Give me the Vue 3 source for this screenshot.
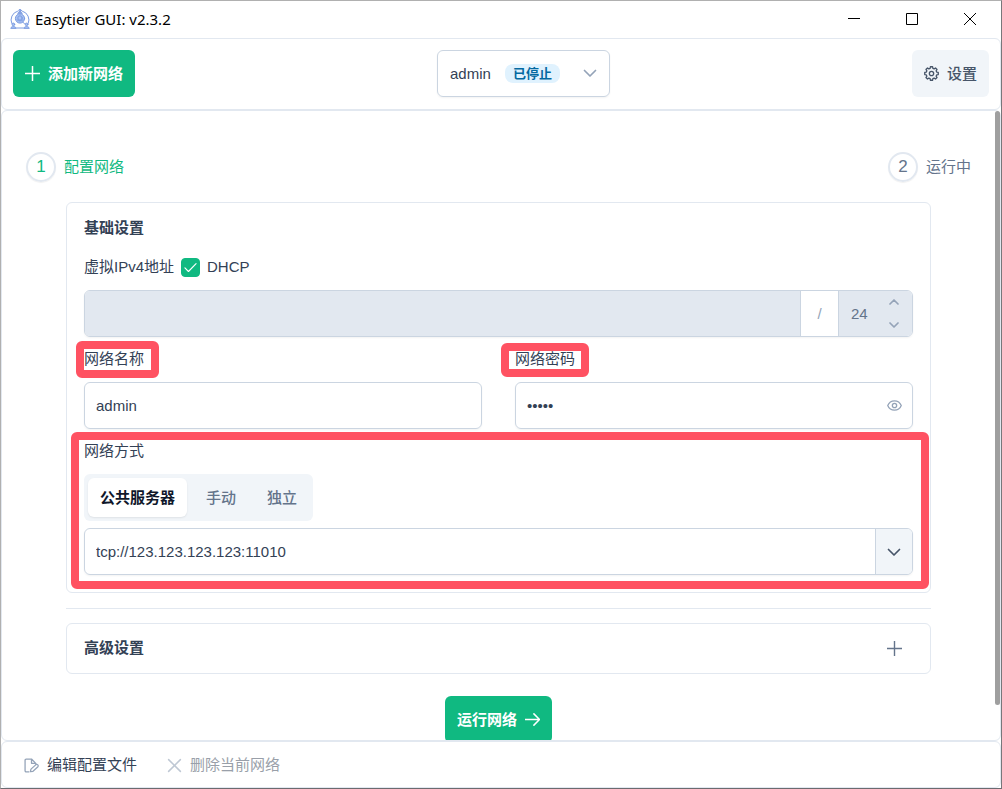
<script setup>
import { ref } from 'vue'

const dhcp = ref(true)
const address = ref('')
const prefix = ref('24')
const networkName = ref('admin')
const networkSecret = ref('admin')
const server = ref('tcp://123.123.123.123:11010')
const instance = ref('admin')
const method = ref(0)
const methods = ['公共服务器', '手动', '独立']

// Outline of the settings gear: eight teeth on a 16 unit grid.
const gear = (() => {
  const pts = []
  for (let i = 0; i < 8; i++) {
    for (const [da, r] of [[-15, 5.7], [-9, 7.3], [9, 7.3], [15, 5.7]]) {
      const a = ((i * 45 + da) * Math.PI) / 180
      pts.push(`${(8 + r * Math.sin(a)).toFixed(2)} ${(8 - r * Math.cos(a)).toFixed(2)}`)
    }
  }
  return `M${pts.join('L')}Z`
})()
</script>

<template>
  <div class="window">
    <header class="titlebar">
      <svg class="logo" viewBox="0 0 20 20" aria-hidden="true">
        <path d="M1.800 14.500A8.800 8.800 0 0 1 7.500 2.200M12.500 2.200a8.800 8.800 0 0 1 5.700 12.300M6.500 19h7" />
        <circle cx="10" cy="9.500" r="4.600" class="logo-fill" />
        <circle cx="10" cy="9" r="2.200" />
        <path d="M7 10.800c2 1.600 4 1.600 6 0M12.700 13l2.300 2.300" />
        <circle cx="10" cy="1.600" r="1.200" class="logo-fill" />
        <circle cx="3.400" cy="15.400" r="1.300" class="logo-fill" />
        <circle cx="16.600" cy="15.400" r="1.300" class="logo-fill" />
        <path d="M.8 19c.3-2 4.900-2 5.200 0zM14 19c.3-2 4.900-2 5.200 0zM7.800 4c.5-1.300 3.900-1.300 4.400 0z" class="logo-fill" />
      </svg>
      <h1>Easytier GUI: v2.3.2</h1>
      <div class="controls">
        <button aria-label="最小化"><svg viewBox="0 0 12 12"><path d="M0 5.500h12" /></svg></button>
        <button aria-label="最大化"><svg viewBox="0 0 12 12"><path d="M.5.5h11v11H.5z" /></svg></button>
        <button aria-label="关闭"><svg viewBox="0 0 12 12"><path d="M0 0l12 12M12 0L0 12" /></svg></button>
      </div>
    </header>

    <nav class="toolbar">
      <button class="btn primary">
        <svg class="icon" viewBox="0 0 16 16"><path d="M8 .5v15M.5 8h15" /></svg>添加新网络
      </button>
      <div class="picker">
        <select v-model="instance" aria-label="网络"><option>admin</option></select>
        <span class="tag">已停止</span>
        <svg class="picker-arrow" viewBox="0 0 14 14"><path d="M1.500 4.500l5.500 5.500 5.500-5.500" /></svg>
      </div>
      <button class="btn secondary">
        <svg class="icon gear" viewBox="0 0 16 16"><path :d="gear" /><circle cx="8" cy="8" r="2.300" /></svg>设置
      </button>
    </nav>

    <main class="body">
      <div class="scroller">
        <ol class="steps">
          <li class="active"><span class="num">1</span>配置网络</li>
          <li><span class="num">2</span>运行中</li>
        </ol>

        <div class="panels">
          <section class="card">
            <h2>基础设置</h2>
            <div class="line">
              <label for="ip">虚拟IPv4地址</label>
              <span class="check">
                <input id="dhcp" v-model="dhcp" type="checkbox" />
                <svg v-if="dhcp" viewBox="0 0 14 14"><path d="M1 7.500l3.800 3.800 8.200-8.500" /></svg>
              </span>
              <label for="dhcp">DHCP</label>
            </div>
            <div class="group">
              <input id="ip" v-model="address" class="box wide" type="text" :disabled="dhcp" />
              <span class="addon">/</span>
              <div class="number">
                <input v-model="prefix" type="text" aria-label="子网前缀" :disabled="dhcp" />
                <div class="spin">
                  <button aria-label="增加"><svg viewBox="0 0 10 6"><path d="M1 5l4-4 4 4" /></svg></button>
                  <button aria-label="减少"><svg viewBox="0 0 10 6"><path d="M1 1l4 4 4-4" /></svg></button>
                </div>
              </div>
            </div>

            <div class="columns">
              <div class="field">
                <label for="name">网络名称</label>
                <input id="name" v-model="networkName" class="box" type="text" />
                <span class="mark mark-name"></span>
              </div>
              <div class="field">
                <label for="secret">网络密码</label>
                <div class="secret">
                  <input id="secret" v-model="networkSecret" class="box" type="password" />
                  <button aria-label="显示密码">
                    <svg viewBox="0 0 16 16"><path d="M.8 8C3.500 1.300 12.500 1.300 15.200 8C12.500 14.700 3.500 14.700.8 8z" /><circle cx="8" cy="8" r="2.300" /></svg>
                  </button>
                </div>
                <span class="mark mark-secret"></span>
              </div>
            </div>

            <div class="field method">
              <label for="server">网络方式</label>
              <div class="segments">
                <button v-for="(m, i) in methods" :key="m" :class="{ on: method === i }" :aria-pressed="method === i" @click="method = i">{{ m }}</button>
              </div>
              <div class="group">
                <input id="server" v-model="server" class="box wide" type="text" />
                <button class="drop" aria-label="选择服务器"><svg viewBox="0 0 14 14"><path d="M1.500 4.500l5.500 5.500 5.500-5.500" /></svg></button>
              </div>
              <span class="mark mark-method"></span>
            </div>
          </section>

          <hr />

          <section class="card advanced">
            <h2>高级设置</h2>
            <button aria-label="展开"><svg viewBox="0 0 15 15"><path d="M7.500 0v15M0 7.500h15" /></svg></button>
          </section>

          <button class="btn primary run">
            运行网络<svg class="icon" viewBox="0 0 16 16"><path d="M.5 8h15M9.500 2l6 6-6 6" /></svg>
          </button>
        </div>
      </div>
      <div class="track"><div class="thumb"></div></div>
    </main>

    <footer class="menubar">
      <button>
        <svg viewBox="0 0 14 14"><path d="M4.500 13H2a1 1 0 0 1-1-1V2a1 1 0 0 1 1-1h5l4 4v1M7 1v4h4M6 12.800l.5-2.400 4.700-4.200c1.300-.7 2.600.7 1.800 1.900l-4.600 4.300z" /></svg>编辑配置文件
      </button>
      <button disabled>
        <svg viewBox="0 0 14 14"><path d="M1.500 1.500l11 11M12.500 1.500l-11 11" /></svg>删除当前网络
      </button>
    </footer>
  </div>
</template>

<style>
body {
  background: #fff;
}
</style>

<style scoped>
* {
  box-sizing: border-box;
  margin: 0;
  padding: 0;
}
.window {
  display: flex;
  flex-direction: column;
  height: 100vh;
  border: 1px solid #b0b0b0;
  border-right-color: #77777b;
  border-bottom-color: #6b6b70;
  background: #fff;
  color: #334155;
  font: 15px/22px "Liberation Sans", "Noto Sans CJK SC", sans-serif;
}
button, input, select {
  font: inherit;
  color: inherit;
  border: 0;
  background: none;
  outline: 0;
}
svg {
  display: block;
  flex: none;
  fill: none;
  stroke: currentColor;
  stroke-linecap: round;
  stroke-linejoin: round;
}
.titlebar {
  display: flex;
  align-items: center;
  flex: none;
  height: 37px;
  padding: 0 2px 2px 9px;
  color: #000;
}
.logo {
  width: 20px;
  height: 20px;
  color: #7b9be0;
}
.logo-fill {
  fill: #a9c3f5;
}
.titlebar h1 {
  margin-left: 5px;
  font: 15px/22px "Noto Sans", sans-serif;
}
.controls {
  display: flex;
  align-self: stretch;
  margin-left: auto;
}
.controls button {
  display: grid;
  place-items: center;
  width: 58px;
}
.controls svg {
  width: 12px;
  height: 12px;
  stroke-linecap: butt;
  stroke-linejoin: miter;
}
.toolbar, .body, .menubar {
  border: 1px solid #e2e8f0;
  border-radius: 6px;
}
.toolbar {
  display: flex;
  justify-content: space-between;
  flex: none;
  padding: 11px 11px 12px;
}
.btn {
  display: flex;
  align-items: center;
  gap: 8px;
  height: 47px;
  padding: 0 12px;
  border-radius: 6px;
  font-weight: 500;
}
.primary {
  background: #10b981;
  color: #fff;
  font-weight: 700;
}
.secondary {
  background: #f1f5f9;
  color: #475569;
}
.icon {
  width: 15px;
  height: 15px;
  stroke-width: 1.6;
}
.gear {
  stroke-width: 1.4;
}
.picker {
  position: relative;
  width: 173px;
}
.picker select {
  width: 100%;
  height: 47px;
  padding: 0 12px;
  border: 1px solid #cbd5e1;
  border-radius: 6px;
  appearance: none;
  box-shadow: 0 1px 2px rgba(18, 18, 23, 0.05);
}
.tag {
  position: absolute;
  top: 14px;
  left: 68px;
  padding: 0 8px;
  border-radius: 8px;
  background: #e0f2fe;
  color: #0369a1;
  font-size: 13px;
  font-weight: 700;
  line-height: 19px;
  pointer-events: none;
}
.picker-arrow {
  position: absolute;
  top: 16px;
  right: 13px;
  width: 14px;
  height: 14px;
  color: #94a3b8;
  stroke-width: 1.7;
  pointer-events: none;
}
.body {
  display: flex;
  flex: 1;
  min-height: 0;
}
.scroller {
  flex: 1;
  overflow: hidden;
  padding: 41px 24px 0;
}
.track {
  width: 5px;
}
.thumb {
  height: 94.5%;
  border-radius: 3px;
  background: #9f9f9f;
}
.steps {
  display: flex;
  justify-content: space-between;
  list-style: none;
  color: #64748b;
}
.steps li {
  display: flex;
  align-items: center;
  gap: 8px;
}
.steps .active {
  color: #10b981;
}
.num {
  display: grid;
  place-items: center;
  width: 30px;
  height: 30px;
  border: 2px solid #e2e8f0;
  border-radius: 50%;
  font-size: 17px;
  box-shadow: 0 1px 1px rgba(0, 0, 0, 0.06);
}
.panels {
  display: flex;
  flex-direction: column;
  padding: 20px 40px 24px;
}
.card {
  padding: 14px 17px 17px;
  border: 1px solid #e2e8f0;
  border-radius: 6px;
}
h2 {
  font-size: 15px;
  font-weight: 700;
}
.line {
  display: flex;
  align-items: center;
  gap: 7px;
  margin: 17px 0 12px;
}
.check {
  position: relative;
  width: 19px;
  height: 19px;
}
.check input {
  display: block;
  width: 19px;
  height: 19px;
  border: 1px solid #cbd5e1;
  border-radius: 4px;
  appearance: none;
}
.check input:checked {
  border-color: #10b981;
  background: #10b981;
}
.check svg {
  position: absolute;
  inset: 3px;
  color: #fff;
  stroke-width: 1.2;
  pointer-events: none;
}
.group {
  display: flex;
  height: 47px;
  border: 1px solid #cbd5e1;
  border-radius: 6px;
  overflow: hidden;
  box-shadow: 0 1px 2px rgba(18, 18, 23, 0.05);
}
.box {
  display: block;
  width: 100%;
  height: 47px;
  padding: 0 11px;
  border: 1px solid #cbd5e1;
  border-radius: 6px;
  box-shadow: 0 1px 2px rgba(18, 18, 23, 0.05);
}
.group .box {
  flex: 1;
  width: auto;
  min-width: 0;
  height: auto;
  border: 0;
  border-radius: 0;
}
.box:disabled, .number {
  background: #e2e8f0;
  color: #64748b;
}
.addon {
  display: grid;
  place-items: center;
  width: 39px;
  border: solid #cbd5e1;
  border-width: 0 1px;
  color: #94a3b8;
}
.number {
  display: flex;
  width: 73px;
}
.number input {
  width: 36px;
  padding-left: 12px;
}
.spin {
  display: flex;
  flex-direction: column;
  flex: 1;
  color: #94a3b8;
}
.spin button {
  display: grid;
  place-items: center;
  flex: 1;
}
.spin svg {
  width: 10px;
  height: 6px;
  stroke-width: 1.7;
}
.columns {
  display: grid;
  grid-template-columns: 1fr 1fr;
  gap: 33px;
  margin: 11px 0;
}
.field {
  position: relative;
}
.field > label {
  display: block;
  margin-bottom: 12px;
}
.secret {
  position: relative;
}
.secret button {
  position: absolute;
  top: 16px;
  right: 11px;
  color: #94a3b8;
}
.secret svg {
  width: 15px;
  height: 15px;
  stroke-width: 1.4;
}
.segments {
  display: flex;
  width: max-content;
  height: 47px;
  margin-bottom: 7px;
  padding: 4px;
  border-radius: 6px;
  background: #f1f5f9;
  color: #64748b;
}
.segments button {
  padding: 0 12px;
  border-radius: 6px;
  font-weight: 500;
}
.segments button + button {
  margin-left: 7px;
}
.segments .on {
  background: #fff;
  color: #0f172a;
  font-weight: 700;
  box-shadow: 0 1px 2px rgba(0, 0, 0, 0.08);
}
.drop {
  display: grid;
  place-items: center;
  width: 37px;
  border-left: 1px solid #cbd5e1;
  background: #f1f5f9;
  color: #475569;
}
.drop svg {
  width: 14px;
  height: 14px;
  stroke-width: 1.7;
}
.mark {
  position: absolute;
  border: 8px solid #ff5262;
  border-radius: 6px;
  pointer-events: none;
}
.mark-name {
  top: -7px;
  left: -8px;
  width: 83px;
  height: 37px;
}
.mark-secret {
  top: -5px;
  left: -14px;
  width: 88px;
  height: 34px;
}
.mark-method {
  inset: -8px -16px -14px -13px;
}
hr {
  margin: 15px 0 14px;
  border: 0;
  border-top: 1px solid #e2e8f0;
}
.advanced {
  display: flex;
  align-items: center;
  justify-content: space-between;
  padding: 13px 28px 14px 17px;
}
.advanced button {
  color: #64748b;
}
.advanced svg {
  width: 15px;
  height: 15px;
  stroke-width: 1.4;
  stroke-linecap: butt;
}
.run {
  align-self: center;
  margin-top: 22px;
}
.menubar {
  display: flex;
  gap: 30px;
  flex: none;
  padding: 12px 22px 11px;
}
.menubar button {
  display: flex;
  align-items: center;
  gap: 8px;
}
.menubar svg {
  width: 15px;
  height: 15px;
  color: #94a3b8;
  stroke-width: 1.2;
}
.menubar button:disabled {
  color: #999fa9;
}
.menubar button:disabled svg {
  color: #bfc8d4;
  stroke-width: 1.4;
}
</style>
